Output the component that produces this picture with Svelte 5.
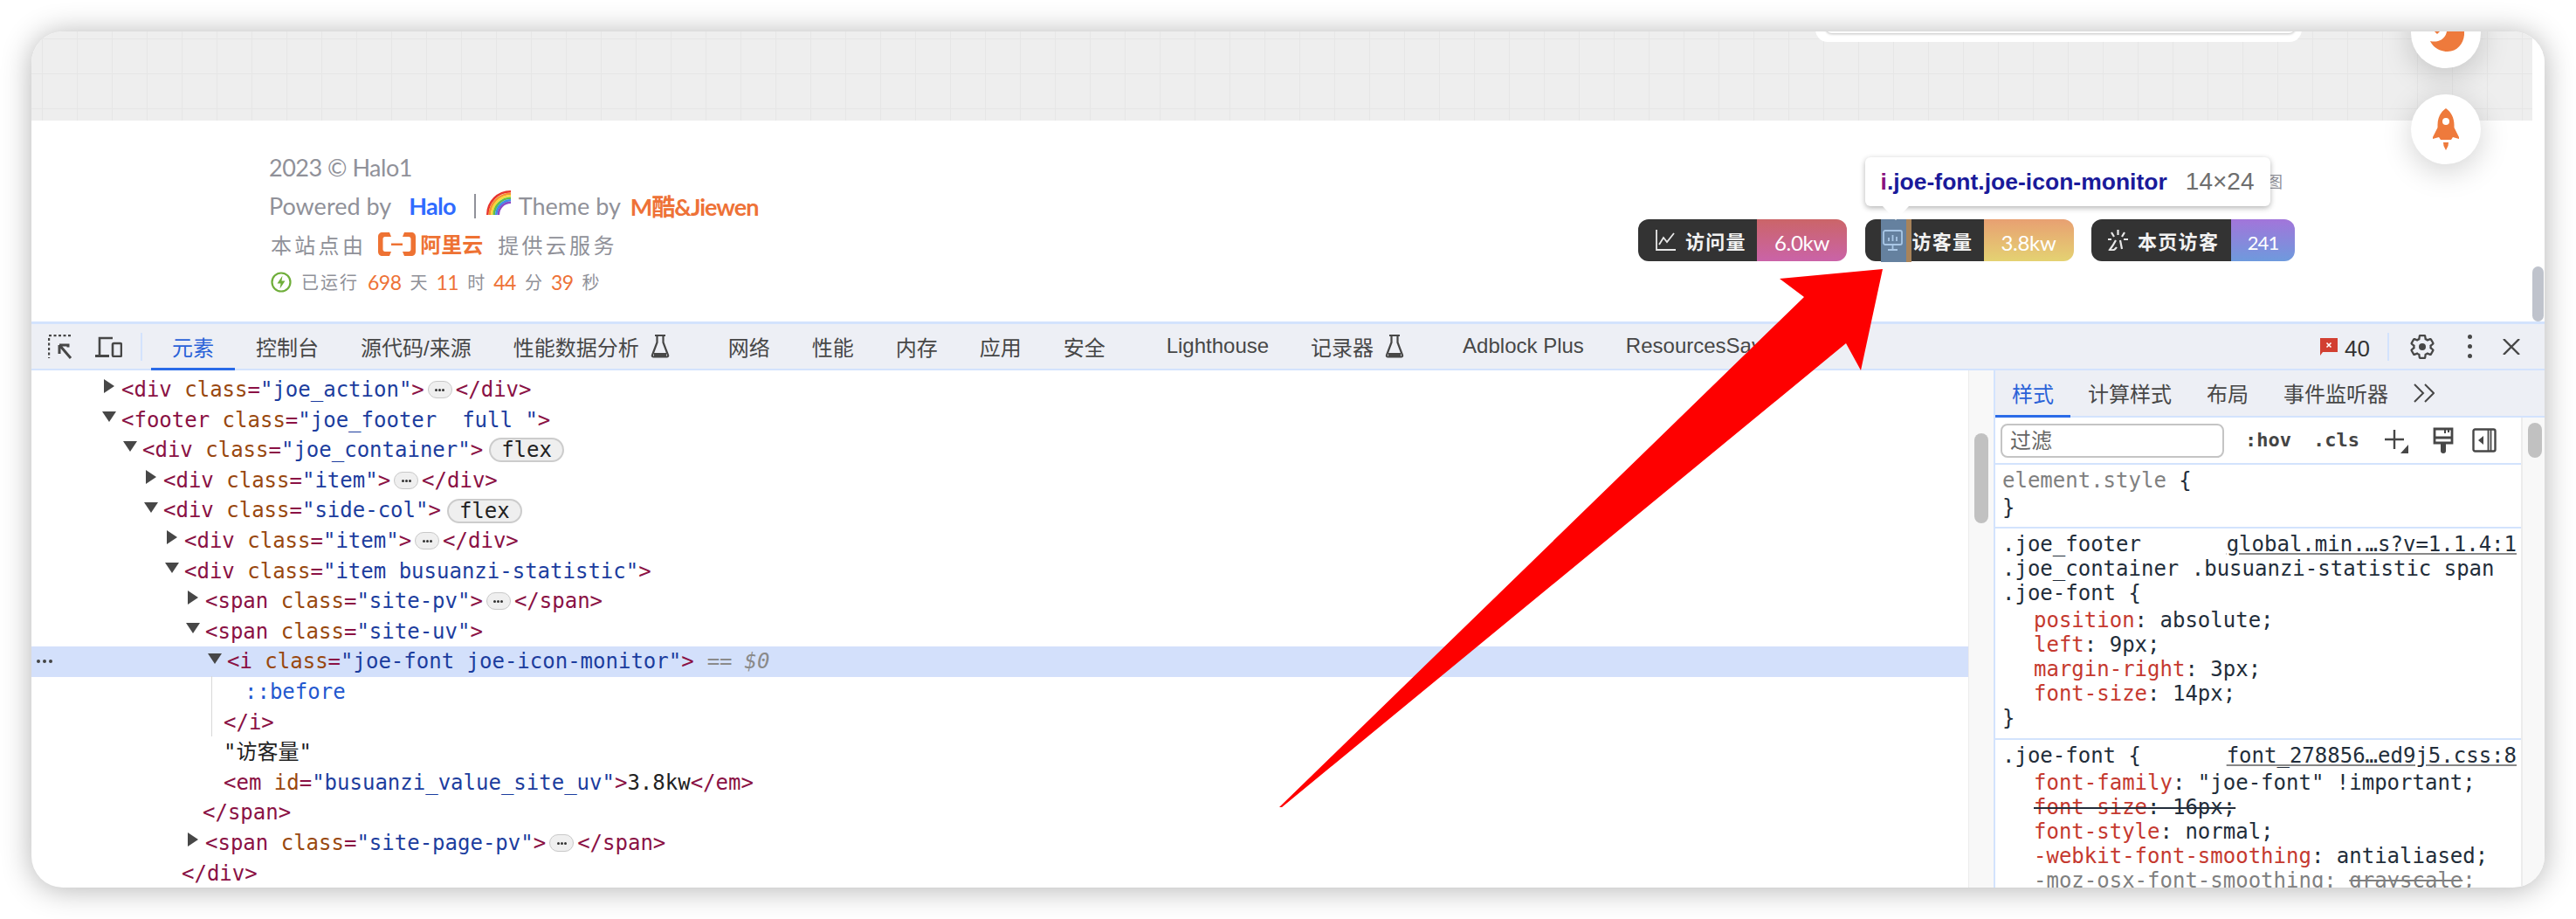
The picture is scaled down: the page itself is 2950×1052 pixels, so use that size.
<script>
	const tag = (s) => ['t', s];
	const open = (name, attr, val) => [tag('<' + name + ' '), ['a', attr], tag('='), ['v', '"' + val + '"'], tag('>')];
	const close = (name) => tag('</' + name + '>');
	const more = ['more', ''];
	const flex = ['flex', 'flex'];

	// x is the left edge of the text on the page, caret is 'r', 'd' or nothing
	const rows = [
		{ x: 103, caret: 'r', parts: [...open('div', 'class', 'joe_action'), more, close('div')] },
		{ x: 103, caret: 'd', parts: [...open('footer', 'class', 'joe_footer  full '), ] },
		{ x: 127, caret: 'd', parts: [...open('div', 'class', 'joe_container'), flex] },
		{ x: 151, caret: 'r', parts: [...open('div', 'class', 'item'), more, close('div')] },
		{ x: 151, caret: 'd', parts: [...open('div', 'class', 'side-col'), flex] },
		{ x: 175, caret: 'r', parts: [...open('div', 'class', 'item'), more, close('div')] },
		{ x: 175, caret: 'd', parts: [...open('div', 'class', 'item busuanzi-statistic')] },
		{ x: 199, caret: 'r', parts: [...open('span', 'class', 'site-pv'), more, close('span')] },
		{ x: 199, caret: 'd', parts: [...open('span', 'class', 'site-uv')] },
		{ x: 224, caret: 'd', selected: true, parts: [...open('i', 'class', 'joe-font joe-icon-monitor'), ['eq', '=='], ['dollar', '$0']] },
		{ x: 244, parts: [['pseudo', '::before']] },
		{ x: 220, parts: [close('i')] },
		{ x: 220, parts: [['p', '"访客量"']] },
		{ x: 220, parts: [...open('em', 'id', 'busuanzi_value_site_uv'), ['p', '3.8kw'], close('em')] },
		{ x: 196, parts: [close('span')] },
		{ x: 199, caret: 'r', parts: [...open('span', 'class', 'site-page-pv'), more, close('span')] },
		{ x: 172, parts: [close('div')] }
	];

	const mainTabs = [
		{ label: '元素', active: true },
		{ label: '控制台' },
		{ label: '源代码/来源' },
		{ label: '性能数据分析', flask: true },
		{ label: '网络' },
		{ label: '性能' },
		{ label: '内存' },
		{ label: '应用' },
		{ label: '安全' },
		{ label: 'Lighthouse', pushed: true },
		{ label: '记录器', flask: true },
		{ label: 'Adblock Plus' },
		{ label: 'ResourcesSaver' }
	];

	const sideTabs = ['样式', '计算样式', '布局', '事件监听器'];
</script>

{#snippet flaskIcon()}
	<svg class="flask" viewBox="0 0 24 28" fill="none" stroke="#474747" stroke-width="2.2">
		<path d="M6 2h12M8.5 2v8L3 24.5c-.5 1.2.2 2 1.4 2h15.2c1.2 0 1.9-.8 1.4-2L15.500 10V2" />
		<path d="M5 22h14v4H5z" fill="#474747" stroke="none" />
	</svg>
{/snippet}

<div class="stage">
	<div class="window">
		<div class="page">
			<div class="page-main">
				<div class="band">
					<div class="share-card"><div class="share-inner"></div></div>
				</div>

				<footer class="footer">
					<div class="site-info">
						<div class="line copyright">2023 © Halo1</div>
						<div class="line">
							<span>Powered by</span>
							<span class="halo">Halo</span>
							<span class="pipe"></span>
							<svg class="rainbow" viewBox="0 0 28 28" fill="none" stroke-width="2.6">
								<path d="M1.300 28C1.300 13 13 1.300 28 1.300" stroke="#e8352e" />
								<path d="M3.800 28C3.800 15 15 3.800 28 3.800" stroke="#f59331" />
								<path d="M6.300 28C6.300 16 16 6.300 28 6.300" stroke="#f8d838" />
								<path d="M8.800 28C8.800 17.500 17.500 8.800 28 8.800" stroke="#5fbf4a" />
								<path d="M11.300 28C11.300 19 19 11.300 28 11.300" stroke="#3d8ee8" />
								<path d="M13.800 28C13.800 20 20 13.800 28 13.800" stroke="#8a4bc8" />
							</svg>
							<span class="theme">Theme by</span>
							<span class="brand">M酷&amp;Jiewen</span>
						</div>
						<div class="line cjk">
							<span class="spaced">本站点由</span>
							<svg class="ali-logo" viewBox="0 0 43 27" fill="#ee7233">
								<path d="M13 0H5C2 0 0 2 0 5v17c0 3 2 5 5 5h8l2-5H8c-1.500 0-2.500-1-2.500-2.500v-12C5.500 6 6.500 5 8 5h7z" />
								<path d="M30 0h8c3 0 5 2 5 5v17c0 3-2 5-5 5h-8l-2-5h7c1.500 0 2.500-1 2.500-2.500v-12C37.500 6 36.500 5 35 5h-7z" />
								<path d="M15 12.500h13v2.500H15z" />
							</svg>
							<span class="ali-name">阿里云</span>
							<span class="spaced provide">提供云服务</span>
						</div>
						<div class="line uptime">
							<svg class="bolt" viewBox="0 0 24 24">
								<circle cx="12" cy="12" r="10.500" fill="none" stroke="#6fae3a" stroke-width="2.200" />
								<path d="M13.500 4.500 7.500 13.500h4l-1 6 6-9h-4z" fill="#6fae3a" />
							</svg>
							<span class="run">已运行</span>
							<em class="num n1">698</em>
							<span class="unit">天</span>
							<em class="num">11</em>
							<span class="unit">时</span>
							<em class="num">44</em>
							<span class="unit">分</span>
							<em class="num">39</em>
							<span class="unit">秒</span>
						</div>
					</div>

					<div class="side-col">
						<div class="qr-row"><span class="qr-label">图</span></div>
						<div class="badges">
							<span class="badge">
								<span class="badge-name">
									<svg class="badge-icon" viewBox="0 0 23 24" fill="none" stroke="#e8e8e8" stroke-width="1.800">
										<path d="M1 0v23h22" />
										<path d="M4 17l5-8 4 5 8-10" />
									</svg>
									访问量
								</span>
								<span class="badge-value pv">6.0kw</span>
							</span>
							<span class="badge uv">
								<span class="badge-name">
									<span class="hl-box"></span>
									<svg class="badge-icon monitor" viewBox="0 0 23 24" fill="none" stroke="#a9c7e6" stroke-width="1.800">
										<rect x="1" y="1" width="21" height="16" rx="2" />
										<path d="M11.500 17v5M6 23h11" />
										<path d="M7 13V9M11.500 13V6M16 13V8" />
									</svg>
									访客量
								</span>
								<span class="badge-value uvv">3.8kw</span>
								<div class="tooltip">
									<span class="tip-name"><b class="tip-i">i</b>.joe-font.joe-icon-monitor</span>
									<span class="tip-size">14×24</span>
								</div>
							</span>
							<span class="badge page-pv">
								<span class="badge-name">
									<svg class="badge-icon" viewBox="0 0 23 24" fill="none" stroke="#e8e8e8" stroke-width="2.200">
										<path d="M11.500 0v6M4 3l3 5M19 3l-3 5M23 11h-5M0 11h4M9 12c-2 4-4 7-7 11 3 1 6 0 8-3M14 12l2 10" />
									</svg>
									本页访客
								</span>
								<span class="badge-value ppv">241</span>
							</span>
						</div>
					</div>
				</footer>

				<div class="fab moon">
					<svg viewBox="0 0 39 23" fill="#ee7a3c">
						<path d="M19 0H39c1 12-7 23-19 23C11 23 3 18 0 11c8 2 17-1 19-11z" />
						<path d="M5 0h6L8 3z" />
					</svg>
				</div>
				<div class="fab rocket">
					<svg viewBox="0 0 32 48" fill="#ee7a3c" fill-rule="evenodd">
						<path d="M16 0c6 4 9.500 11 9.500 19v3l5.500 11v2l-7-2-2 3H10l-2-3-7 2v-2l5.500-11v-3C6.500 11 10 4 16 0zM16 11a4 4 0 1 0 0 8 4 4 0 0 0 0-8z" />
						<path d="M13 39h6l-.5 4L16 48l-2.500-5z" />
					</svg>
				</div>
			</div>
			<div class="page-scroll"><div class="page-thumb"></div></div>
		</div>

		<div class="devtools">
			<div class="toolbar">
				<svg class="tool inspect" viewBox="0 0 28 28" fill="none" stroke="#474747" stroke-width="2.400">
					<path d="M1 1h26" stroke-dasharray="3 2.500" />
					<path d="M1 4v23" stroke-dasharray="3 2.500" />
					<path d="M13 12h10v2.500M13 12v10M13.500 12.500 26 27" stroke-width="3" />
				</svg>
				<svg class="tool device" viewBox="0 0 31 24" fill="none" stroke="#474747" stroke-width="2.600">
					<path d="M5 21V2h15" />
					<path d="M0 22.500h16" stroke-width="3" />
					<rect x="20" y="8" width="10" height="15" rx="1.500" />
				</svg>
				<span class="tool-sep"></span>
				<div class="tabs">
					{#each mainTabs as tab}
						<span class="tab" class:active={tab.active} class:has-flask={tab.flask} class:pushed={tab.pushed}>
							{tab.label}
							{#if tab.flask}{@render flaskIcon()}{/if}
						</span>
					{/each}
				</div>
				<div class="tool-right">
					<svg class="err" viewBox="0 0 20 20">
						<path d="M0 0h20v16H3l-3 4z" fill="#d23f31" />
						<path d="M7.500 5.500l5 5M12.500 5.500l-5 5" stroke="#fff" stroke-width="1.600" />
					</svg>
					<span class="err-count">40</span>
					<span class="tool-sep right"></span>
					<svg class="gear" viewBox="0 0 24 24" fill="none" stroke="#474747" stroke-width="1.700">
						<path d="M19.140 12.940c.04-.3.06-.61.06-.94 0-.32-.02-.64-.07-.94l2.030-1.580c.18-.14.23-.41.12-.61l-1.920-3.320c-.12-.22-.37-.29-.59-.22l-2.390.96c-.5-.38-1.030-.7-1.620-.94l-.36-2.540c-.04-.24-.24-.41-.48-.41h-3.840c-.24 0-.43.17-.47.41l-.36 2.540c-.59.24-1.130.57-1.620.94l-2.390-.96c-.22-.08-.47 0-.59.22L2.740 8.870c-.12.21-.08.47.12.61l2.030 1.580c-.05.3-.09.63-.09.94s.02.64.07.94l-2.030 1.580c-.18.14-.23.41-.12.61l1.920 3.320c.12.22.37.29.59.22l2.390-.96c.5.38 1.030.7 1.620.94l.36 2.540c.05.24.24.41.48.41h3.840c.24 0 .44-.17.47-.41l.36-2.540c.59-.24 1.130-.56 1.620-.94l2.390.96c.22.08.47 0 .59-.22l1.920-3.320c.12-.22.07-.47-.12-.61l-2.010-1.580z" />
						<circle cx="12" cy="12" r="3" fill="#474747" stroke="none" />
					</svg>
					<span class="dots"><i></i><i></i><i></i></span>
					<svg class="close" viewBox="0 0 20 18" fill="none" stroke="#474747" stroke-width="2.400">
						<path d="M1 0l18 18M19 0 1 18" />
					</svg>
				</div>
			</div>

			<div class="panels">
				<div class="dom">
					{#each rows as row}
						<div class="row" class:selected={row.selected}>
							{#if row.selected}<span class="row-dots"><i></i><i></i><i></i></span>{/if}
							<div class="row-text" style="padding-left: {row.x}px">
								{#if row.caret}<span class="caret {row.caret}"></span>{/if}
								{#each row.parts as [kind, text]}
									{#if kind === 'more'}
										<span class="more"><i></i><i></i><i></i></span>
									{:else}
										<span class={kind}>{text}</span>
									{/if}
								{/each}
							</div>
						</div>
					{/each}
					<span class="guide"></span>
				</div>
				<div class="dom-scroll"><div class="dom-thumb"></div></div>

				<div class="sidebar">
					<div class="side-tabs">
						{#each sideTabs as label, i}
							<span class="side-tab" class:active={i === 0}>{label}</span>
						{/each}
						<svg class="chev" viewBox="0 0 24 22" fill="none" stroke="#474747" stroke-width="2">
							<path d="M1 1l10 10L1 21M13 1l10 10-10 10" />
						</svg>
					</div>
					<div class="side-body">
						<div class="styles">
							<div class="filter-row">
								<div class="filter">过滤</div>
								<span class="flag hov">:hov</span>
								<span class="flag cls">.cls</span>
								<svg class="plus" viewBox="0 0 30 30">
									<path d="M13 3v22M2 14h22" stroke="#474747" stroke-width="2.400" />
									<path d="M29 20v10H20z" fill="#474747" />
								</svg>
								<svg class="brush" viewBox="0 0 24 30" fill="none" stroke="#474747" stroke-width="2.800">
									<path d="M2 2h20v16H2zM2 12h20" />
									<path d="M14 2v5M18 2v4" stroke-width="2" />
									<path d="M9 19h6v8a3 3 0 0 1-6 0z" fill="#474747" stroke="none" />
								</svg>
								<svg class="toggle" viewBox="0 0 28 28" fill="none" stroke="#474747" stroke-width="2.400">
									<rect x="1.500" y="1.500" width="25" height="25" rx="2" />
									<path d="M18.500 2v24M21.500 2v24" stroke-width="1.800" />
									<path d="M13 9v10l-6-5z" fill="#474747" stroke="none" />
								</svg>
							</div>

							<div class="rule first">
								<div class="sel"><span class="muted">element.style</span> {'{'}</div>
								<div>{'}'}</div>
							</div>

							<div class="rule second">
								<div class="sel-line"><span>.joe_footer</span><span class="link">global.min.…s?v=1.1.4:1</span></div>
								<div>.joe_container .busuanzi-statistic span</div>
								<div class="sel">.joe-font {'{'}</div>
								<div class="decl"><span class="prop">position</span>: absolute;</div>
								<div class="decl"><span class="prop">left</span>: 9px;</div>
								<div class="decl"><span class="prop">margin-right</span>: 3px;</div>
								<div class="decl"><span class="prop">font-size</span>: 14px;</div>
								<div>{'}'}</div>
							</div>

							<div class="rule third">
								<div class="sel sel-line"><span>.joe-font {'{'}</span><span class="link">font_278856…ed9j5.css:8</span></div>
								<div class="decl"><span class="prop">font-family</span>: "joe-font" !important;</div>
								<div class="decl struck"><span class="prop">font-size</span>: 16px;</div>
								<div class="decl"><span class="prop">font-style</span>: normal;</div>
								<div class="decl"><span class="prop">-webkit-font-smoothing</span>: antialiased;</div>
								<div class="decl dim">-moz-osx-font-smoothing: <s>grayscale</s>;</div>
							</div>
						</div>
						<div class="side-scroll"><div class="side-thumb"></div></div>
					</div>
				</div>
			</div>
		</div>
	</div>

	<svg class="red-arrow" viewBox="0 0 2950 1052">
		<polygon points="2156,308 2038,319 2066,340 1465,924 1468,924 2114,393 2131,424" fill="#fe0000" />
	</svg>
</div>

<style>
	:global(body) {
		margin: 0;
		background: #fff;
	}

	.stage {
		position: relative;
		width: 2950px;
		height: 1052px;
		box-sizing: border-box;
		padding: 36px;
		overflow: hidden;
		font-family: 'Liberation Sans', 'Noto Sans CJK SC', sans-serif;
	}

	.window {
		width: 2878px;
		height: 980px;
		border-radius: 36px;
		overflow: hidden;
		background: #fff;
		box-shadow: 0 2px 34px rgba(0, 0, 0, 0.3);
		display: flex;
		flex-direction: column;
	}

	.red-arrow {
		position: absolute;
		left: 0;
		top: 0;
		width: 2950px;
		height: 1052px;
	}

	/* page above devtools */
	.page {
		height: 332px;
		display: flex;
		flex: none;
	}

	.page-main {
		position: relative;
		flex: 1;
		display: flex;
		flex-direction: column;
	}

	.page-scroll {
		width: 14px;
		background: #fff;
	}

	.page-thumb {
		margin-top: 269px;
		height: 63px;
		width: 13px;
		border-radius: 7px;
		background: #bfc3cc;
	}

	.band {
		position: relative;
		height: 102px;
		flex: none;
		background-color: #eee;
		background-image: linear-gradient(#e6e6e6 1px, transparent 1px), linear-gradient(90deg, #e6e6e6 1px, transparent 1px);
		background-size: 40px 40px;
		background-position: 12px 8px;
	}

	.share-card {
		position: absolute;
		left: 2043px;
		top: -30px;
		width: 557px;
		height: 42px;
		box-sizing: border-box;
		padding: 0 7px 10px 11px;
		background: #fff;
		border-radius: 0 0 14px 14px;
	}

	.share-inner {
		height: 100%;
		border-radius: 0 0 8px 8px;
		background: #fff;
		box-shadow: 0 1px 3px rgba(0, 0, 0, 0.25);
	}

	.fab {
		position: absolute;
		left: 2725px;
		width: 80px;
		height: 80px;
		border-radius: 50%;
		background: #fff;
		box-shadow: 0 8px 34px rgba(0, 0, 0, 0.18);
		display: flex;
		align-items: center;
		justify-content: center;
	}

	.moon {
		top: -38px;
	}

	.moon svg {
		width: 39px;
		height: 23px;
		margin: 19px 0 0 3px;
	}

	.rocket {
		top: 72px;
	}

	.rocket svg {
		width: 32px;
		height: 48px;
	}

	/* footer of the page */
	.footer {
		flex: 1;
		display: flex;
		justify-content: space-between;
		padding: 33px 272px 0;
	}

	.site-info {
		color: #909199;
		font-family: Lato, 'Noto Sans CJK SC', sans-serif;
		font-size: 27px;
	}

	.line {
		display: flex;
		align-items: center;
		height: 43.300px;
		box-sizing: border-box;
		white-space: nowrap;
	}

	.copyright {
		padding-bottom: 2px;
		letter-spacing: -0.500px;
	}

	.halo {
		margin-left: 20px;
		color: #2f6bff;
		font-weight: 700;
		letter-spacing: -0.700px;
	}

	.pipe {
		width: 2px;
		height: 28px;
		margin-left: 21px;
		background: #909199;
	}

	.rainbow {
		width: 28px;
		height: 28px;
		margin: -8px 0 0 12px;
	}

	.theme {
		margin-left: 9px;
	}

	.brand {
		margin-left: 11px;
		color: #ee7237;
		font-weight: 700;
		letter-spacing: -1px;
	}

	.cjk {
		font-size: 24px;
	}

	.spaced {
		letter-spacing: 3.300px;
		margin-left: 2px;
	}

	.ali-logo {
		width: 43px;
		height: 27px;
		margin-left: 14px;
	}

	.ali-name {
		margin-left: 5px;
		color: #ee7233;
		font-weight: 700;
		line-height: 27px;
	}

	.provide {
		margin-left: 17px;
	}

	.uptime {
		font-size: 20px;
	}

	.bolt {
		width: 24px;
		height: 24px;
		margin-left: 2px;
	}

	.run {
		margin-left: 11px;
		letter-spacing: 2px;
	}

	.num {
		margin-left: 10px;
		color: #ee7237;
		font-style: normal;
		font-size: 23px;
		letter-spacing: -0.500px;
	}

	.unit {
		margin-left: 10px;
	}

	/* badges */
	.side-col {
		display: flex;
		flex-direction: column;
	}

	.qr-row {
		height: 80px;
		display: flex;
		justify-content: flex-end;
		align-items: flex-start;
		padding-right: 14px;
	}

	.qr-label {
		margin-top: 28px;
		color: #909199;
		font-size: 18px;
		line-height: 20px;
	}

	.badges {
		display: flex;
		gap: 20.500px;
	}

	.badge {
		position: relative;
		display: flex;
		height: 48px;
	}

	.badge-name {
		position: relative;
		display: flex;
		align-items: center;
		gap: 11px;
		width: 136px;
		box-sizing: border-box;
		padding-left: 20px;
		background: #333;
		border-radius: 12px 0 0 12px;
		color: #f2f2f2;
		font-size: 22px;
		font-weight: 700;
		letter-spacing: 1.300px;
		white-space: nowrap;
	}

	.page-pv .badge-name {
		width: 160px;
		padding-left: 19px;
	}

	.badge-icon {
		position: relative;
		width: 23px;
		height: 24px;
	}

	.badge-value {
		display: flex;
		align-items: center;
		justify-content: center;
		width: 103px;
		padding-top: 4px;
		box-sizing: border-box;
		border-radius: 0 12px 12px 0;
		color: #fff;
		font-family: Lato, sans-serif;
		font-size: 24px;
		letter-spacing: -0.300px;
	}

	.pv {
		background: linear-gradient(#cb6568, #ca63a8);
	}

	.uvv {
		background: linear-gradient(#e8a072, #e4d272);
	}

	.ppv {
		width: 73px;
		background: linear-gradient(#a275da, #6e9add);
		font-size: 22px;
		letter-spacing: -1px;
	}

	.hl-box {
		position: absolute;
		left: 18.500px;
		top: 0;
		width: 28.500px;
		height: 49px;
		background: #65819f;
		border-right: 6px solid #a8835a;
	}

	.tooltip {
		position: absolute;
		left: 0;
		bottom: 63px;
		width: 464px;
		height: 56px;
		box-sizing: border-box;
		padding: 0 18px;
		display: flex;
		align-items: center;
		justify-content: space-between;
		background: #fff;
		border-radius: 6px;
		box-shadow: 0 2px 6px rgba(0, 0, 0, 0.3);
		white-space: nowrap;
		font-family: 'Liberation Sans', sans-serif;
		font-size: 26.500px;
	}

	.tooltip::after {
		content: '';
		position: absolute;
		left: 20.500px;
		top: 56px;
		border-left: 15.500px solid transparent;
		border-right: 15.500px solid transparent;
		border-top: 16px solid #fff;
	}

	.tip-name {
		color: #1a1a9a;
		font-weight: 700;
	}

	.tip-i {
		color: #881280;
	}

	.tip-size {
		color: #6e6e6e;
		font-size: 28px;
	}

	/* devtools */
	.devtools {
		flex: 1;
		min-height: 0;
		display: flex;
		flex-direction: column;
	}

	.toolbar {
		flex: none;
		height: 56px;
		box-sizing: border-box;
		display: flex;
		align-items: center;
		padding: 0 28px 0 19px;
		background: #edeff5;
		border-top: 3px solid #d3e3fd;
		border-bottom: 2px solid #d3e3fd;
		color: #474747;
		font-size: 24px;
	}

	.tool {
		flex: none;
	}

	.inspect {
		width: 28px;
		height: 28px;
	}

	.device {
		width: 31px;
		height: 24px;
		margin-left: 26px;
	}

	.tool-sep {
		flex: none;
		width: 2px;
		height: 32px;
		margin: 0 10px 0 21px;
		background: #d3e3fd;
	}

	.tabs {
		display: flex;
		align-self: stretch;
		white-space: nowrap;
	}

	.tab {
		display: flex;
		align-items: center;
		gap: 12px;
		padding: 0 24px;
		margin-bottom: -2px;
		border-bottom: 3px solid transparent;
		box-sizing: border-box;
	}

	.tab.active {
		color: #2a62d8;
		border-bottom-color: #2a6be8;
	}

	.tab.has-flask {
		padding-right: 42px;
	}

	.tab.pushed {
		margin-left: 22px;
	}

	.flask {
		width: 24px;
		height: 28px;
	}

	.tool-right {
		margin-left: auto;
		display: flex;
		align-items: center;
	}

	.err {
		width: 20px;
		height: 20px;
	}

	.err-count {
		margin-left: 8px;
		color: #333;
		font-size: 26px;
		line-height: 30px;
		padding-top: 4px;
	}

	.tool-sep.right {
		margin: 0 22px 0 20px;
	}

	.gear {
		width: 32px;
		height: 32px;
	}

	.dots {
		display: flex;
		flex-direction: column;
		gap: 6px;
		margin-left: 36px;
	}

	.dots i {
		width: 5px;
		height: 5px;
		border-radius: 50%;
		background: #474747;
	}

	.close {
		width: 20px;
		height: 18px;
		margin-left: 35px;
	}

	.panels {
		flex: 1;
		min-height: 0;
		display: flex;
	}

	.dom {
		position: relative;
		width: 2218px;
		flex: none;
		padding-top: 5px;
		box-sizing: border-box;
		font-family: 'DejaVu Sans Mono', 'Noto Sans CJK SC', monospace;
		font-size: 24px;
		white-space: nowrap;
		overflow: hidden;
	}

	.row {
		position: relative;
		height: 34.600px;
		line-height: 34.600px;
	}

	.row.selected {
		background: #d3e0fb;
	}

	.row-dots {
		position: absolute;
		left: 6px;
		top: 15px;
		display: flex;
		gap: 3px;
	}

	.row-dots i {
		width: 4px;
		height: 4px;
		border-radius: 50%;
		background: #444;
	}

	.row-text {
		display: flex;
		align-items: center;
		height: 100%;
		white-space: pre;
	}

	.caret {
		width: 0;
		height: 0;
		position: relative;
		left: -20px;
		top: -4px;
	}

	.caret.r {
		border-left: 12px solid #474747;
		border-top: 8px solid transparent;
		border-bottom: 8px solid transparent;
		margin-right: -12px;
	}

	.caret.d {
		left: -22px;
		border-top: 12px solid #474747;
		border-left: 8px solid transparent;
		border-right: 8px solid transparent;
		margin-right: -16px;
	}

	.t {
		color: #8a1144;
	}

	.a {
		color: #99480f;
	}

	.v {
		color: #1c3d9e;
	}

	.p {
		color: #222;
	}

	.pseudo {
		color: #2358cf;
	}

	.eq {
		margin-left: 15px;
		color: #8a8a8a;
	}

	.dollar {
		margin-left: 14px;
		color: #8a8a8a;
		font-style: italic;
	}

	.more {
		display: flex;
		align-items: center;
		justify-content: center;
		gap: 1px;
		width: 28px;
		height: 20px;
		box-sizing: border-box;
		margin: 0 4px;
		border: 1.500px solid #c8c8c8;
		border-radius: 10px;
		background: #efefef;
	}

	.more i {
		width: 3px;
		height: 3px;
		border-radius: 50%;
		background: #333;
	}

	.flex {
		height: 28px;
		box-sizing: border-box;
		margin-left: 7px;
		padding: 0 12px;
		border: 2px solid #ccc;
		border-radius: 14px;
		background: #efefef;
		color: #222;
		line-height: 24px;
	}

	.guide {
		position: absolute;
		left: 206px;
		top: 350px;
		width: 1px;
		height: 69px;
		background: #d8d8d8;
	}

	.dom-scroll {
		width: 29px;
		flex: none;
		box-sizing: border-box;
		padding: 72px 0 0 6px;
		background: #f8f8f8;
		border-left: 1px solid #ececec;
	}

	.dom-thumb {
		width: 16px;
		height: 103px;
		border-radius: 8px;
		background: #c1c1c1;
	}

	.sidebar {
		flex: 1;
		min-width: 0;
		display: flex;
		flex-direction: column;
		border-left: 2px solid #d3e3fd;
	}

	.side-tabs {
		flex: none;
		height: 54px;
		box-sizing: border-box;
		display: flex;
		align-items: stretch;
		background: #edeff5;
		border-bottom: 2px solid #d3e3fd;
		color: #474747;
		font-size: 24px;
		white-space: nowrap;
	}

	.side-tab {
		display: flex;
		align-items: center;
		padding: 0 20px;
		border-bottom: 3px solid transparent;
		margin-bottom: -2px;
	}

	.side-tab.active {
		color: #2a62d8;
		border-bottom-color: #2a6be8;
		padding: 0 19px;
	}

	.chev {
		width: 24px;
		height: 22px;
		align-self: center;
		margin-left: 9px;
	}

	.side-body {
		flex: 1;
		min-height: 0;
		display: flex;
	}

	.styles {
		width: 602px;
		flex: none;
		overflow: hidden;
		font-family: 'DejaVu Sans Mono', 'Noto Sans CJK SC', monospace;
		font-size: 24px;
		line-height: 28px;
		color: #222d3a;
		white-space: nowrap;
	}

	.filter-row {
		position: relative;
		height: 54px;
		box-sizing: border-box;
		display: flex;
		align-items: center;
		padding-left: 6px;
		border-bottom: 2px solid #d3e3fd;
	}

	.filter {
		width: 256px;
		height: 39px;
		box-sizing: border-box;
		padding-left: 9px;
		border: 2px solid #c4c4c4;
		border-radius: 8px;
		color: #666;
		font-family: 'Liberation Sans', 'Noto Sans CJK SC', sans-serif;
		line-height: 35px;
	}

	.flag {
		font-size: 22px;
		font-weight: 700;
		color: #444;
		line-height: 28px;
	}

	.hov {
		margin-left: 24px;
	}

	.cls {
		margin-left: 25px;
	}

	.plus {
		width: 30px;
		height: 30px;
		margin-left: 27px;
	}

	.brush {
		width: 24px;
		height: 30px;
		margin-left: 27px;
	}

	.toggle {
		width: 28px;
		height: 28px;
		margin-left: 21px;
	}

	.rule {
		padding: 4px 5px 0 8px;
		border-bottom: 2px solid #d3e3fd;
	}

	.rule.first {
		height: 73px;
		box-sizing: border-box;
	}

	.rule.second {
		height: 242px;
		box-sizing: border-box;
	}

	.rule.third {
		border-bottom: none;
	}

	.sel {
		margin-bottom: 3px;
	}

	.sel-line {
		display: flex;
		justify-content: space-between;
	}

	.muted {
		color: #808080;
	}

	.link {
		text-decoration: underline;
		text-decoration-color: #888;
	}

	.decl {
		padding-left: 36px;
	}

	.prop {
		color: #c5392f;
	}

	.struck {
		text-decoration: line-through;
		text-decoration-color: #222d3a;
		text-decoration-thickness: 2px;
	}

	.dim {
		color: #808080;
	}

	.side-scroll {
		flex: 1;
		box-sizing: border-box;
		padding: 6px 0 0 6px;
		background: #f8f8f8;
		border-left: 2px solid #ececec;
	}

	.side-thumb {
		width: 16px;
		height: 40px;
		border-radius: 8px;
		background: #c1c1c1;
	}
</style>
